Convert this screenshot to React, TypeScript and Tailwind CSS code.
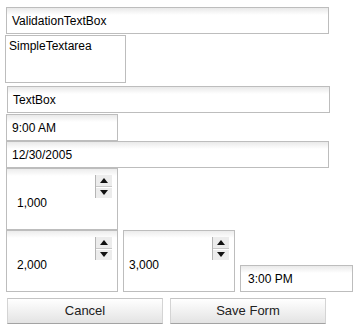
import React from "react";

const field =
  "border border-[#bdbdbd] bg-[linear-gradient(#e9e9e9,#ffffff_7px)] flex items-center";

function TextField({ value, className }: { value: string; className: string }) {
  return (
    <div className={`${field} ${className}`}>
      <span>{value}</span>
    </div>
  );
}

function Arrows() {
  return (
    <div className="mt-[6px] mr-[5px] w-[17px] h-[23px] flex flex-col border-l border-[#b5b5b5] bg-[#ececec]">
      <div className="flex-1 flex items-center justify-center border-b border-[#c8c8c8]">
        <svg width="8" height="5" viewBox="0 0 8 5">
          <polygon points="4,0 8,5 0,5" fill="#111" />
        </svg>
      </div>
      <div className="flex-1 flex items-center justify-center border-t border-white">
        <svg width="8" height="5" viewBox="0 0 8 5">
          <polygon points="0,0 8,0 4,5" fill="#111" />
        </svg>
      </div>
    </div>
  );
}

function Spinner({ value, className, pad = "pl-[10px]" }: { value: string; className: string; pad?: string }) {
  return (
    <div className={`border border-[#bdbdbd] bg-[linear-gradient(#ececec,#ffffff_7px)] flex items-start h-[62px] w-[112px] ${className}`}>
      <div className={`flex-1 self-center pt-[7px] ${pad}`}>{value}</div>
      <Arrows />
    </div>
  );
}

function Button({ label, className }: { label: string; className: string }) {
  return (
    <button
      className={`h-[26px] w-[156px] border border-[#d4d4d4] border-t-[#c4c4c4] border-b-[#a3a3a3] bg-[linear-gradient(#ffffff,#f4f4f4_40%,#e3e3e3)] text-[13px] text-[#222] ${className}`}
    >
      {label}
    </button>
  );
}

export default function App() {
  return (
    <div className="w-[358px] h-[333px] bg-white text-[12px] leading-[14px] text-black font-['Liberation_Sans',Arial,sans-serif] pt-[7px]">
      <TextField value="ValidationTextBox" className="ml-[6px] w-[323px] h-[27px] pl-[5px]" />
      <div className="mt-[1px] ml-[5px] w-[121px] h-[48px] border border-[#bdbdbd] bg-white pl-[3px] pt-[3px]">
        SimpleTextarea
      </div>
      <TextField value="TextBox" className="mt-[3px] ml-[7px] w-[323px] h-[27px] pl-[5px]" />
      <TextField value="9:00 AM" className="mt-[1px] ml-[6px] w-[112px] h-[27px] pl-[5px]" />
      <TextField value="12/30/2005" className="ml-[6px] w-[323px] h-[27px] pl-[5px]" />
      <Spinner value="1,000" className="ml-[6px]" />
      <div className="flex items-start">
        <Spinner value="2,000" className="ml-[6px]" />
        <Spinner value="3,000" className="ml-[5px]" pad="pl-[5px]" />
        <TextField value="3:00 PM" className="mt-[35px] ml-[5px] w-[113px] h-[27px] pl-[7px]" />
      </div>
      <div className="flex mt-[6px]">
        <Button label="Cancel" className="ml-[7px]" />
        <Button label="Save Form" className="ml-[7px]" />
      </div>
    </div>
  );
}
